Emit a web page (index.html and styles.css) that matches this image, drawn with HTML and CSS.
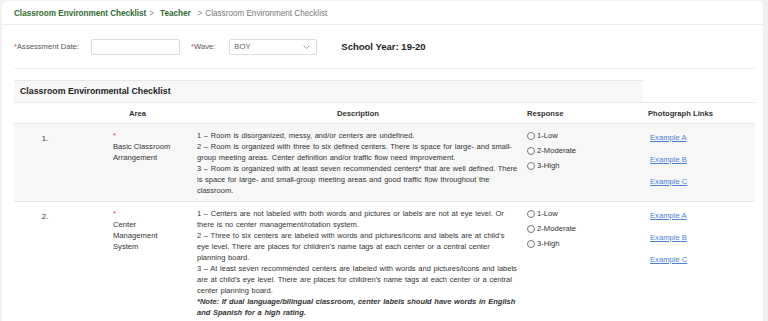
FILE: index.html
```html
<!DOCTYPE html>
<html lang="en">
<head>
  <meta charset="UTF-8">
  <meta name="viewport" content="width=device-width, initial-scale=1.0">
  <title>Classroom Environment Checklist</title>
  <link rel="stylesheet" href="styles.css">
</head>
<body>
  <div class="card">
    <div class="crumbs">
      <a class="crumb-link" href="#">Classroom Environment Checklist</a><span class="sep">&gt;</span><a class="crumb-link" href="#">Teacher</a><span class="sep sep-last">&gt;</span><span class="crumb-current">Classroom Environment Checklist</span>
    </div>

    <div class="content">
      <div class="form-row">
        <label class="field-label"><span class="req">*</span>Assessment Date:</label>
        <input class="date-box" type="text">
        <label class="field-label wave-label"><span class="req">*</span>Wave:</label>
        <div class="select-box">
          <span>BOY</span>
          <svg class="chevron" width="7" height="4" viewBox="0 0 7 4"><path d="M0.5 0.5 L3.5 3.5 L6.5 0.5" fill="none" stroke="#888" stroke-width="0.8"/></svg>
        </div>
        <div class="school-year">School Year: 19-20</div>
      </div>

      <div class="section-title">Classroom Environmental Checklist</div>

      <table class="checklist">
        <colgroup>
          <col class="c-num">
          <col class="c-area">
          <col class="c-desc">
          <col class="c-resp">
          <col class="c-links">
        </colgroup>
        <thead>
          <tr>
            <th></th>
            <th class="th-center">Area</th>
            <th class="th-center">Description</th>
            <th>Response</th>
            <th>Photograph Links</th>
          </tr>
        </thead>
        <tbody>
          <tr class="row-alt">
            <td class="num">1.</td>
            <td><div class="area"><span class="req">*</span><br>Basic Classroom Arrangement</div></td>
            <td class="desc">1 – Room is disorganized, messy, and/or centers are undefined.<br>2 – Room is organized with three to six defined centers. There is space for large- and small-group meeting areas. Center definition and/or traffic flow need improvement.<br>3 – Room is organized with at least seven recommended centers* that are well defined. There is space for large- and small-group meeting areas and good traffic flow throughout the classroom.</td>
            <td>
              <label class="radio"><input type="radio" name="r1"> 1-Low</label>
              <label class="radio"><input type="radio" name="r1"> 2-Moderate</label>
              <label class="radio"><input type="radio" name="r1"> 3-High</label>
            </td>
            <td class="links">
              <a href="#">Example A</a>
              <a href="#">Example B</a>
              <a href="#">Example C</a>
            </td>
          </tr>
          <tr>
            <td class="num">2.</td>
            <td><div class="area"><span class="req">*</span><br>Center Management System</div></td>
            <td class="desc">1 – Centers are not labeled with both words and pictures or labels are not at eye level. Or there is no center management/rotation system.<br>2 – Three to six centers are labeled with words and pictures/icons and labels are at child’s eye level. There are places for children’s name tags at each center or a central center planning board.<br>3 – At least seven recommended centers are labeled with words and pictures/icons and labels are at child’s eye level. There are places for children’s name tags at each center or a central center planning board.<br><b><i>*Note: If dual language/bilingual classroom, center labels should have words in English and Spanish for a high rating.</i></b></td>
            <td>
              <label class="radio"><input type="radio" name="r2"> 1-Low</label>
              <label class="radio"><input type="radio" name="r2"> 2-Moderate</label>
              <label class="radio"><input type="radio" name="r2"> 3-High</label>
            </td>
            <td class="links">
              <a href="#">Example A</a>
              <a href="#">Example B</a>
              <a href="#">Example C</a>
            </td>
          </tr>
        </tbody>
      </table>
    </div>
  </div>
</body>
</html>
```

FILE: styles.css
```css
body {
  margin: 0;
  background: #f1f1f1;
  font-family: "Liberation Sans", Arial, sans-serif;
  font-size: 7.65px;
  line-height: 11px;
  color: #333;
}

.card {
  margin: 1px 5px 0 2px;
  background: #fff;
  border-radius: 5px 5px 0 0;
  height: 320px;
  overflow: hidden;
}

.crumbs {
  height: 23px;
  line-height: 25px;
  padding-left: 12px;
  border-bottom: 1px solid #ececec;
  font-size: 8.15px;
  color: #777;
}

.crumb-link {
  color: #2f6b2f;
  font-weight: bold;
  text-decoration: none;
}

.sep {
  margin: 0 6px 0 3px;
  color: #888;
}

.sep-last {
  margin: 0 3px 0 7px;
}

.content {
  padding: 0 8px 0 12px;
}

.form-row {
  display: flex;
  align-items: center;
  height: 43px;
  border-bottom: 1px dotted #dcdcdc;
}

.field-label {
  color: #555;
}

.req {
  color: #e53935;
}

.date-box {
  width: 87px;
  height: 14px;
  margin: 0 0 0 12px;
  padding: 0;
  border: 1px solid #dcdcdc;
  border-radius: 2px;
}

.wave-label {
  margin-left: 11px;
}

.select-box {
  width: 78px;
  height: 14px;
  margin-left: 14px;
  padding: 0 4px 0 4px;
  border: 1px solid #dcdcdc;
  border-radius: 2px;
  display: flex;
  align-items: center;
  justify-content: space-between;
  color: #666;
}

.chevron {
  margin-right: 2px;
}

.school-year {
  margin-left: 24px;
  font-size: 9.5px;
  font-weight: bold;
  color: #222;
}

.section-title {
  width: 623px;
  margin-top: 11px;
  padding-left: 6px;
  height: 21px;
  line-height: 21px;
  background: #f8f8f8;
  border-top: 1px solid #e8e8e8;
  font-weight: bold;
  color: #222;
  font-size: 8.8px;
}

.checklist {
  width: 741px;
  table-layout: fixed;
  border-collapse: collapse;
  border-top: 1px solid #e8e8e8;
}

.c-num { width: 66px; }
.c-area { width: 115px; }
.c-desc { width: 326px; }
.c-resp { width: 121px; }
.c-links { width: 113px; }

.checklist th {
  height: 20px;
  text-align: left;
  font-weight: bold;
  color: #333;
  padding: 0 0 0 6px;
  border-bottom: 1px solid #e8e8e8;
}

.checklist th.th-center {
  text-align: center;
  padding: 0;
}

.checklist td {
  vertical-align: top;
  padding: 6px 0 3px 6px;
  border-bottom: 1px solid #e8e8e8;
}

.row-alt td {
  background: #f7f7f7;
}

.checklist td.num {
  text-align: center;
  padding: 9px 4px 0 0;
}

.area {
  width: 66px;
  margin-left: 27px;
}

.checklist td.desc {
  padding: 6px 2.5px 3px 2px;
  font-size: 7.5px;
  word-spacing: 0.6px;
}

.radio {
  display: flex;
  align-items: center;
  height: 11px;
  margin-bottom: 4px;
}

.radio input {
  appearance: none;
  width: 8px;
  height: 8px;
  margin: 0 2px 0 0;
  border: 1px solid #777;
  border-radius: 50%;
  background: #fff;
}

.links a {
  display: block;
  margin: 2px 0 11px 2px;
  color: #4a7fd6;
  text-decoration: underline;
}
```
